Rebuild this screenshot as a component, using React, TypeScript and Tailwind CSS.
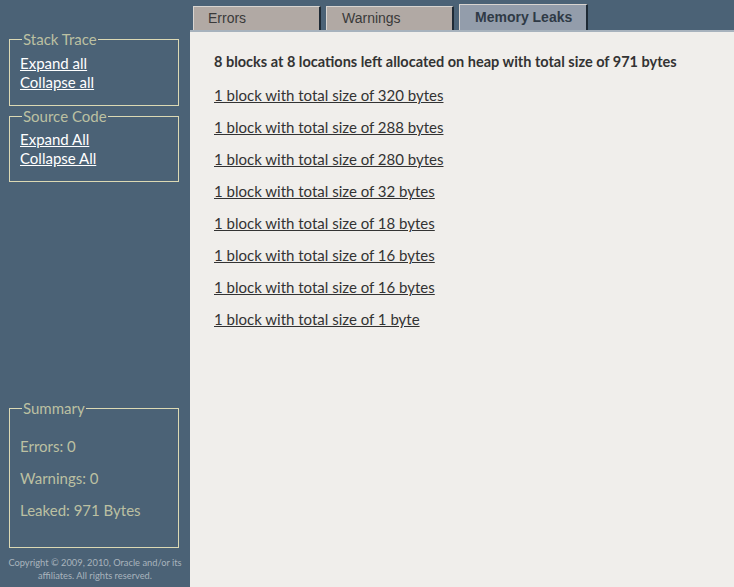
import React from "react";

const leaks = [
  "1 block with total size of 320 bytes",
  "1 block with total size of 288 bytes",
  "1 block with total size of 280 bytes",
  "1 block with total size of 32 bytes",
  "1 block with total size of 18 bytes",
  "1 block with total size of 16 bytes",
  "1 block with total size of 16 bytes",
  "1 block with total size of 1 byte",
];

const gill = { fontFamily: "Lato, 'Open Sans', sans-serif" };
const arial = { fontFamily: "'Liberation Sans', Arial, sans-serif" };

function Box({ title, children, className = "" }: { title: string; children: React.ReactNode; className?: string }) {
  return (
    <fieldset className={`ml-[9px] mr-[11px] border border-[#dcd9b4] px-[10px] ${className}`}>
      <legend className="ml-[2px] px-[1px] text-[15px] leading-[18px] text-[#bcc0a2]">{title}</legend>
      {children}
    </fieldset>
  );
}

export default function App() {
  return (
    <div className="flex h-[587px] w-[734px] overflow-hidden bg-[#4b6276]" style={gill}>
      {/* Sidebar */}
      <div className="flex w-[190px] flex-col pt-[30px]">
        <Box title="Stack Trace" className="h-[76px]">
          <div className="mt-[6px] flex flex-col text-[15px] leading-[19px] text-white">
            <a className="underline">Expand all</a>
            <a className="underline">Collapse all</a>
          </div>
        </Box>
        <Box title="Source Code" className="mt-[1px] h-[75px]">
          <div className="mt-[5px] flex flex-col text-[15px] leading-[19px] text-white">
            <a className="underline">Expand All</a>
            <a className="underline">Collapse All</a>
          </div>
        </Box>

        <div className="flex-1" />

        <Box title="Summary" className="h-[149px]">
          <div className="mt-[20px] flex flex-col gap-[13px] text-[15px] leading-[19px] text-[#bcc0a2]">
            <div>Errors: 0</div>
            <div>Warnings: 0</div>
            <div>Leaked: 971 Bytes</div>
          </div>
        </Box>
        <div className="mb-[5px] mt-[8px] text-center text-[9.3px] leading-[13px] text-[#a9b4bd]">
          Copyright © 2009, 2010, Oracle and/or its
          <br />
          affiliates. All rights reserved.
        </div>
      </div>

      {/* Main */}
      <div className="flex flex-1 flex-col">
        <div className="flex h-[30px] items-end gap-[5px] pl-[3px]">
          <div className="flex h-[24px] w-[128px] items-end border-l border-t border-r-2 border-l-[#d8d4d0] border-t-[#d8d4d0] border-r-[#1e2a35] bg-[#b1a9a4] pb-[1px] pl-[14px] text-[14px] text-[#3a3a3a]" style={arial}>
            Errors
          </div>
          <div className="flex h-[24px] w-[128px] items-end border-l border-t border-r-2 border-l-[#d8d4d0] border-t-[#d8d4d0] border-r-[#1e2a35] bg-[#b1a9a4] pb-[1px] pl-[15px] text-[14px] text-[#3a3a3a]" style={arial}>
            Warnings
          </div>
          <div className="flex h-[26px] w-[129px] items-end border-l border-t border-r-2 border-l-[#d8d4d0] border-t-[#d8d4d0] border-r-[#1e2a35] bg-[#939dab] pb-[2px] pl-[15px] text-[14px] font-bold text-[#2f3a46]" style={arial}>
            Memory Leaks
          </div>
        </div>
        <div className="flex-1 border-t-2 border-[#a7b2bd] bg-[#f0eeeb] pl-[24px] pt-[21px] text-[#333]">
          <div className="text-[14.5px] font-bold leading-[18px]">
            8 blocks at 8 locations left allocated on heap with total size of 971 bytes
          </div>
          <div className="mt-[15px] flex flex-col gap-[13px]">
            {leaks.map((l, i) => (
              <a key={i} className="text-[15px] leading-[19px] underline">
                {l}
              </a>
            ))}
          </div>
        </div>
      </div>
    </div>
  );
}
